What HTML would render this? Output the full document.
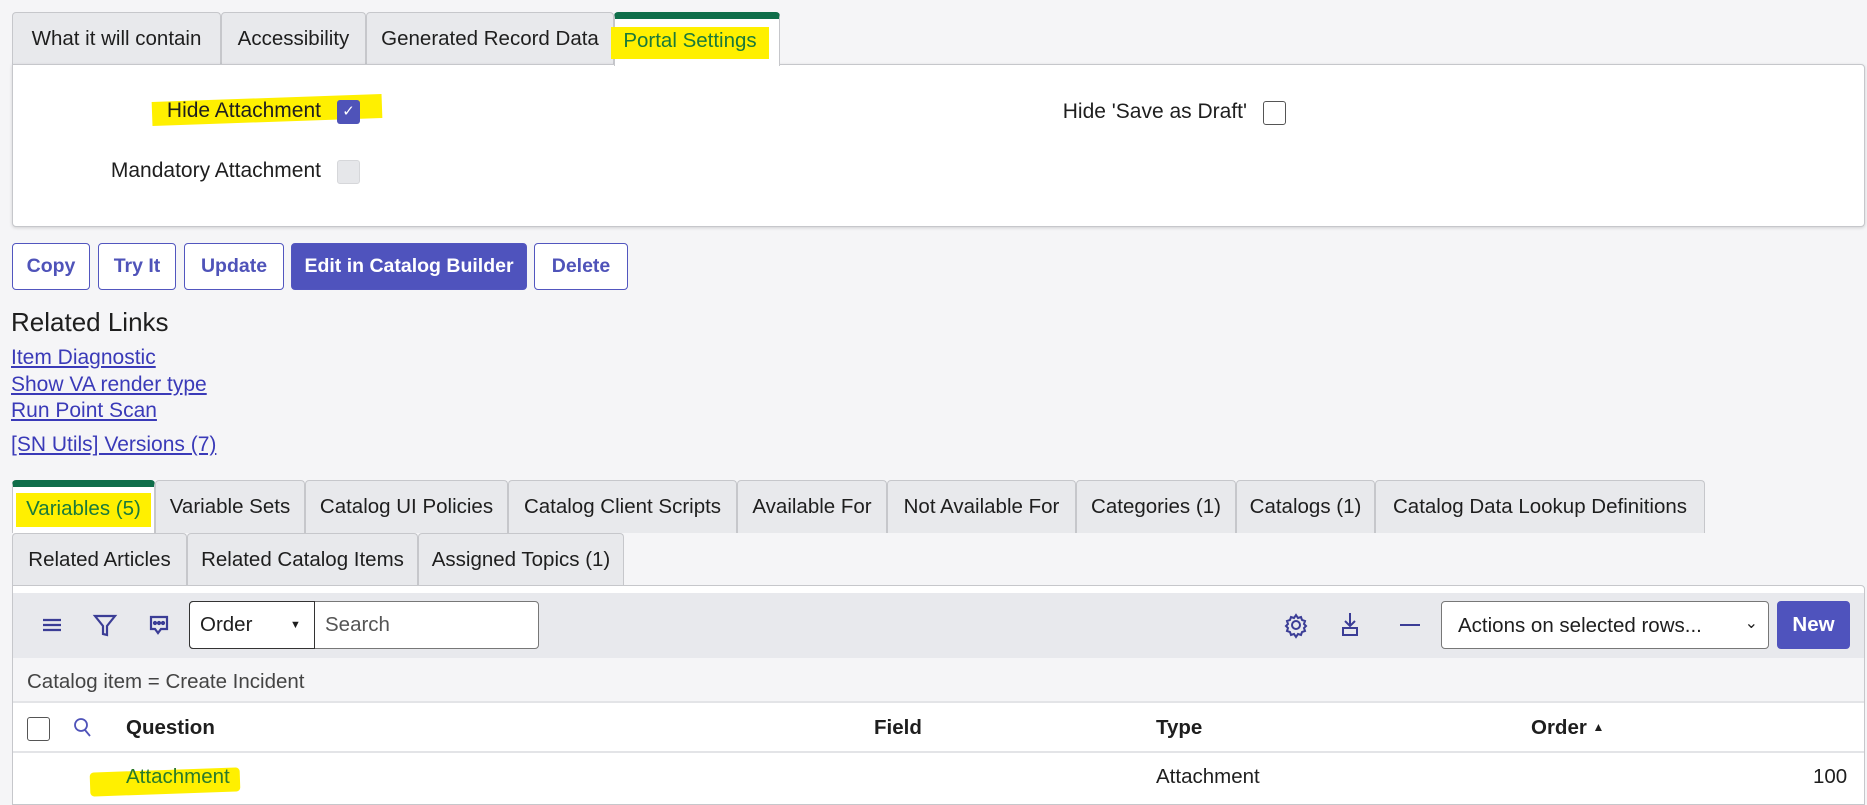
<!DOCTYPE html>
<html><head><meta charset="utf-8"><style>
*{box-sizing:border-box;margin:0;padding:0}
body{width:1867px;height:796px;overflow:hidden;background:#f5f5f7;font-family:"Liberation Sans",Arial,sans-serif;font-size:20.5px;color:#1e1e1e;position:relative}
.a{position:absolute}
.tab{position:absolute;background:#e8e9ec;border:1px solid #c6c7cb;border-bottom:none;border-radius:4px 4px 0 0;display:flex;align-items:center;justify-content:center;white-space:nowrap}
.tab.act{background:#fff;color:#1a7a3a;border-top:7px solid #0f6e4a}
.hl{background:#fff000;}
.btn{position:absolute;top:243px;height:47px;border:1px solid #5256bf;border-radius:4px;background:#fff;color:#4f53b9;font-weight:bold;display:flex;align-items:center;justify-content:center;font-size:19.5px}
.lnk{position:absolute;left:11px;color:#3a3ab8;text-decoration:underline;font-size:21px}
.cb{position:absolute;width:23px;height:24px;border-radius:3px}
.lbl{position:absolute;text-align:right;font-size:21px;white-space:nowrap}
</style></head><body>
<!-- top tabs -->
<div class="tab" style="left:12px;top:12px;width:209px;height:53px">What it will contain</div>
<div class="tab" style="left:221px;top:12px;width:145px;height:53px">Accessibility</div>
<div class="tab" style="left:366px;top:12px;width:248px;height:53px">Generated Record Data</div>
<div class="a" style="left:12px;top:64px;width:1853px;height:163px;background:#fff;border:1px solid #c6c7cb;border-radius:0 4px 4px 4px;box-shadow:0 1px 3px rgba(0,0,0,.15)"></div>
<div class="tab act" style="left:614px;top:12px;width:166px;height:54px;border-bottom:none;z-index:2"><span class="hl" style="padding:2px 12px 6px;margin-left:-14px">Portal Settings</span></div>
<div class="a hl" style="left:152px;top:98px;width:230px;height:24px;transform:rotate(-2deg)"></div>
<div class="lbl" style="right:1546px;top:99px">Hide Attachment</div>
<div class="cb" style="left:337px;top:100px;background:#4f53b9;color:#fff;font-size:15px;text-align:center;line-height:24px">✓</div>
<div class="lbl" style="right:1546px;top:159px">Mandatory Attachment</div>
<div class="cb" style="left:337px;top:160px;background:#e6e7ea;border:1px solid #d6d7da"></div>
<div class="lbl" style="right:620px;top:100px">Hide 'Save as Draft'</div>
<div class="cb" style="left:1263px;top:101px;background:#fff;border:1.5px solid #555"></div>
<!-- buttons -->
<div class="btn" style="left:12px;width:78px">Copy</div>
<div class="btn" style="left:98px;width:78px">Try It</div>
<div class="btn" style="left:184px;width:100px">Update</div>
<div class="btn" style="left:291px;width:236px;background:#4f53bd;color:#fff">Edit in Catalog Builder</div>
<div class="btn" style="left:534px;width:94px">Delete</div>
<div class="a" style="left:11px;top:307px;font-size:26px">Related Links</div>
<div class="lnk" style="top:346px">Item Diagnostic</div>
<div class="lnk" style="top:373px">Show VA render type</div>
<div class="lnk" style="top:399px">Run Point Scan</div>
<div class="lnk" style="top:433px">[SN Utils] Versions (7)</div>
<!-- related tabs -->
<div class="tab act" style="left:12px;top:480px;width:143px;height:53px;z-index:2"><span class="hl" style="padding:4px 10px 6px">Variables (5)</span></div>
<div class="tab" style="left:155px;top:480px;width:150px;height:53px">Variable Sets</div>
<div class="tab" style="left:305px;top:480px;width:203px;height:53px">Catalog UI Policies</div>
<div class="tab" style="left:508px;top:480px;width:229px;height:53px">Catalog Client Scripts</div>
<div class="tab" style="left:737px;top:480px;width:150px;height:53px">Available For</div>
<div class="tab" style="left:887px;top:480px;width:189px;height:53px">Not Available For</div>
<div class="tab" style="left:1076px;top:480px;width:160px;height:53px">Categories (1)</div>
<div class="tab" style="left:1236px;top:480px;width:139px;height:53px">Catalogs (1)</div>
<div class="tab" style="left:1375px;top:480px;width:330px;height:53px">Catalog Data Lookup Definitions</div>
<div class="tab" style="left:12px;top:533px;width:175px;height:53px">Related Articles</div>
<div class="tab" style="left:187px;top:533px;width:231px;height:53px">Related Catalog Items</div>
<div class="tab" style="left:418px;top:533px;width:206px;height:53px">Assigned Topics (1)</div>
<!-- list -->
<div class="a" style="left:12px;top:585px;width:1853px;height:220px;background:#fff;border:1px solid #c6c7cb;border-radius:0 4px 0 0"></div>
<div class="a" style="left:13px;top:593px;width:1851px;height:65px;background:#e8e9ed"></div>
<svg class="a" style="left:40px;top:612px" width="140" height="26" viewBox="0 0 140 26" fill="none" stroke="#3b3d96" stroke-width="2.2">
<path d="M3 8h18M3 13h18M3 18h18"/>
<path d="M55 4h20l-8 10v9l-4-1v-8z"/>
<path d="M111 5h16v12h-6l-3 4-3-4h-4z"/><circle cx="115" cy="11" r="1" fill="#3b3d96"/><circle cx="119" cy="11" r="1" fill="#3b3d96"/><circle cx="123" cy="11" r="1" fill="#3b3d96"/>
</svg>
<div class="a" style="left:189px;top:601px;width:350px;height:48px;background:#fff;border:1px solid #777;border-radius:4px"></div>
<div class="a" style="left:189px;top:601px;width:126px;height:48px;border:1.5px solid #333;border-radius:4px 0 0 4px"></div>
<div class="a" style="left:200px;top:613px">Order</div>
<div class="a" style="left:290px;top:619px;font-size:11px">▼</div>
<div class="a" style="left:325px;top:613px;color:#555">Search</div>
<svg class="a" style="left:1280px;top:610px" width="150" height="30" viewBox="0 0 150 30" fill="none" stroke="#3b3d96" stroke-width="2">
<circle cx="16" cy="15" r="4"/><path d="M16 5l2 3 3-1 1 3 3 1-1 3 2 2-2 2 1 3-3 1-1 3-3-1-2 3-2-3-3 1-1-3-3-1 1-3-2-2 2-2-1-3 3-1 1-3 3 1z"/>
<path d="M70 3v13M65 11l5 5 5-5M63 18h14v7H63z"/>
<path d="M120 15h20"/>
</svg>
<div class="a" style="left:1441px;top:601px;width:328px;height:48px;background:#fff;border:1px solid #777;border-radius:4px;padding:12px 16px">Actions on selected rows...<span style="position:absolute;right:10px;top:11px;font-size:16px">⌄</span></div>
<div class="a" style="left:1777px;top:601px;width:73px;height:48px;background:#4f53bd;color:#fff;font-weight:bold;border-radius:4px;display:flex;align-items:center;justify-content:center">New</div>
<div class="a" style="left:13px;top:658px;width:1851px;height:45px;background:#f5f5f7;border-bottom:2px solid #e3e4e7"></div>
<div class="a" style="left:27px;top:670px;color:#444">Catalog item = Create Incident</div>
<div class="a" style="left:13px;top:751px;width:1851px;height:2px;background:#e3e4e7"></div>
<div class="a" style="left:27px;top:717px;width:23px;height:24px;border:1.5px solid #555;border-radius:3px"></div>
<svg class="a" style="left:73px;top:717px" width="20" height="22" viewBox="0 0 20 22" fill="none" stroke="#4f53b9" stroke-width="1.8"><circle cx="8" cy="8" r="6"/><path d="M12 13l5 6"/></svg>
<div class="a" style="left:126px;top:716px;font-weight:bold">Question</div>
<div class="a" style="left:874px;top:716px;font-weight:bold">Field</div>
<div class="a" style="left:1156px;top:716px;font-weight:bold">Type</div>
<div class="a" style="left:1531px;top:716px;font-weight:bold">Order <span style="font-size:12px;vertical-align:3px">▲</span></div>
<div class="a hl" style="left:90px;top:770px;width:150px;height:24px;transform:rotate(-2deg);border-radius:4px"></div>
<div class="a" style="left:126px;top:765px;color:#2a7a2a">Attachment</div>
<div class="a" style="left:1156px;top:765px">Attachment</div>
<div class="a" style="left:1813px;top:765px">100</div>
</body></html>
